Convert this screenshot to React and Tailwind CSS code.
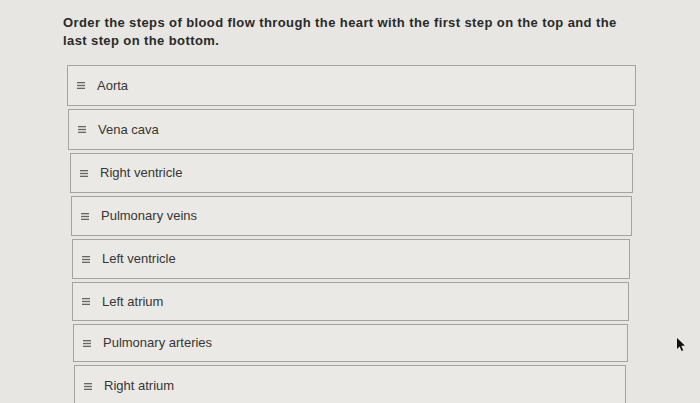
import React from "react";

const rows = [
  { label: "Aorta", cls: "ml-[67px] w-[569px] h-[41px]" },
  { label: "Vena cava", cls: "ml-[68px] w-[566px] h-[41px]" },
  { label: "Right ventricle", cls: "ml-[70px] w-[563px] h-[40px]" },
  { label: "Pulmonary veins", cls: "ml-[71px] w-[561px] h-[40px]" },
  { label: "Left ventricle", cls: "ml-[72px] w-[558px] h-[40px]" },
  { label: "Left atrium", cls: "ml-[72px] w-[557px] h-[39px]" },
  { label: "Pulmonary arteries", cls: "ml-[73px] w-[555px] h-[38px]" },
  { label: "Right atrium", cls: "ml-[74px] w-[552px] h-[42px]" },
];

function Grip() {
  return (
    <svg width="8" height="7" viewBox="0 0 8 7" className="shrink-0">
      <rect x="0" y="0" width="8" height="1.3" fill="#666664" />
      <rect x="0" y="2.85" width="8" height="1.3" fill="#666664" />
      <rect x="0" y="5.7" width="8" height="1.3" fill="#666664" />
    </svg>
  );
}

export default function App() {
  return (
    <div
      className="relative w-[700px] h-[403px] overflow-hidden bg-[#e7e6e2]"
      style={{ fontFamily: '"Liberation Sans", Arial, sans-serif' }}
    >
      <div className="pt-[14px] pl-[63px] pr-[40px] text-[13px] leading-[18px] font-bold tracking-[0.4px] text-[#2a2a2a]">
        Order the steps of blood flow through the heart with the first step on the top and the
        <br />
        last step on the bottom.
      </div>
      <div className="mt-[15px] flex flex-col gap-[3px]">
        {rows.map((r) => (
          <div
            key={r.label}
            className={`${r.cls} shrink-0 flex items-center border border-[#a3a3a1] bg-[#eae9e5] pl-[9px]`}
          >
            <Grip />
            <span className="ml-[12px] text-[13px] text-[#363636]">{r.label}</span>
          </div>
        ))}
      </div>
      <svg
        className="absolute left-[676px] top-[337px]"
        width="10"
        height="15"
        viewBox="0 0 10 15"
      >
        <path d="M1 1 L1 12 L3.6 9.6 L5.6 14 L7.2 13.2 L5.3 8.9 L8.8 8.6 Z" fill="#111" />
      </svg>
    </div>
  );
}
